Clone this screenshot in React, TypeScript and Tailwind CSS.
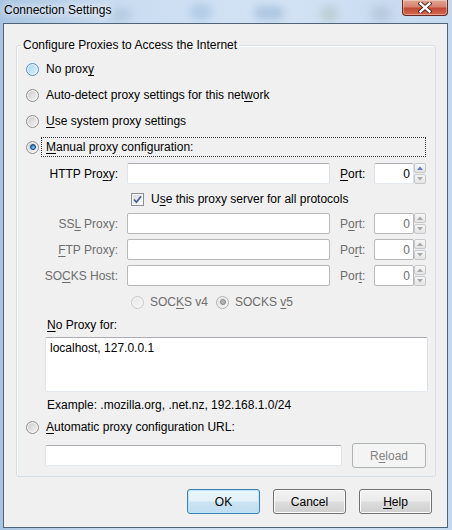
import type { ReactNode } from "react";

const GRAY = "text-[#6d6d6d]";

function Key({ children }: { children: ReactNode }) {
  return <u className="underline underline-offset-[2px]">{children}</u>;
}

function Radio({ state }: { state: "off" | "hover" | "on" | "dis-off" | "dis-on" }) {
  const ring =
    state === "hover"
      ? "border-[#4f94cf] bg-[linear-gradient(135deg,#9fd3f5,#e4f3fd)]"
      : state === "dis-off"
        ? "border-[#c8c8c8] bg-[linear-gradient(135deg,#e6e6e6,#f8f8f8)]"
        : state === "dis-on"
          ? "border-[#b0b0b0] bg-[linear-gradient(135deg,#dcdcdc,#f6f6f6)]"
          : "border-[#8e8f8f] bg-[linear-gradient(135deg,#c9c9c9,#f7f7f7)]";
  return (
    <span
      className={`flex h-[13px] w-[13px] shrink-0 items-center justify-center rounded-full border shadow-[inset_0_0_0_1px_#f4f4f4] ${ring}`}
    >
      {state === "on" && (
        <span className="h-[6px] w-[6px] rounded-full border border-[#0d3c72] bg-[radial-gradient(circle_at_60%_70%,#7fd3fa,#1a5fa8)]" />
      )}
      {state === "dis-on" && <span className="h-[6px] w-[6px] rounded-full border border-[#8a8a8a] bg-[#b4b4b4]" />}
    </span>
  );
}

function Checkbox() {
  return (
    <span className="flex h-[13px] w-[13px] shrink-0 items-center justify-center border border-[#8e8f8f] bg-[linear-gradient(135deg,#d9d9d9,#ffffff)] shadow-[inset_0_0_0_1px_#f4f4f4]">
      <svg width="9" height="9" viewBox="0 0 9 9">
        <path d="M1 4.5 L3.5 7.2 L8 1.3" fill="none" stroke="#4a5f97" strokeWidth="1.8" />
      </svg>
    </span>
  );
}

function TextBox({ w, disabled, children, right }: { w: string; disabled?: boolean; children?: ReactNode; right?: boolean }) {
  return (
    <div
      className={`flex h-[21px] ${w} items-center rounded-[2px] border bg-white px-[3px] ${
        right ? "justify-end" : ""
      } ${
        disabled
          ? "border-[#b8b8b8] text-[#6d6d6d]"
          : "border-[#abadb3] border-b-[#e3e9ef] border-l-[#e2e3ea] border-r-[#dbdfe6]"
      }`}
    >
      {children}
    </div>
  );
}

function SpinBtn({ up, on }: { up?: boolean; on?: boolean }) {
  return (
    <div className="flex h-[10px] w-[12px] items-center justify-center rounded-[2px] border border-[#c4c7cb] bg-[linear-gradient(#f7f7f7,#e4e4e4)]">
      <svg width="6" height="4" viewBox="0 0 6 4">
        <path d={up ? "M0 4 L3 0.5 L6 4 Z" : "M0 0 L3 3.5 L6 0 Z"} fill={on ? "#5a7cb8" : "#a9a9a9"} />
      </svg>
    </div>
  );
}

function Port({ disabled }: { disabled?: boolean }) {
  return (
    <div className="flex">
      <TextBox w="w-[40px]" disabled={disabled} right>
        0
      </TextBox>
      <div className="flex flex-col gap-[1px]">
        <SpinBtn up on={!disabled} />
        <SpinBtn />
      </div>
    </div>
  );
}

function ProxyRow({ label, portLabel, disabled, className }: { label: ReactNode; portLabel: ReactNode; disabled?: boolean; className: string }) {
  return (
    <div className={`flex h-[21px] items-center ${className} ${disabled ? GRAY : ""}`}>
      <span className="w-[101px] text-right">{label}</span>
      <div className="ml-[9px]">
        <TextBox w="w-[203px]" disabled={disabled} />
      </div>
      <span className="ml-[10px] w-[34px]">{portLabel}</span>
      <Port disabled={disabled} />
    </div>
  );
}

function OptionRow({ state, children, focus }: { state: "off" | "hover" | "on"; children: ReactNode; focus?: boolean }) {
  return (
    <div className="flex h-[26px] items-center pl-[9px]">
      <Radio state={state} />
      <span
        className={`ml-[2px] mr-[9px] flex h-[20px] flex-1 items-center border px-[4px] ${
          focus ? "border-dotted border-[#333]" : "border-transparent"
        }`}
      >
        {children}
      </span>
    </div>
  );
}

function Button({ children, primary, disabled, className }: { children: ReactNode; primary?: boolean; disabled?: boolean; className: string }) {
  const look = disabled
    ? "border-[#adb2b5] bg-[#f4f4f4] text-[#838383]"
    : primary
      ? "border-[#3c7fb1] bg-[linear-gradient(#eaf6fd_0%,#e4f1f9_48%,#cbe4f3_52%,#bfdcef_100%)] shadow-[inset_0_0_0_1px_#bde6fb]"
      : "border-[#707070] bg-[linear-gradient(#f2f2f2_0%,#ebebeb_48%,#dddddd_52%,#cfcfcf_100%)] shadow-[inset_0_0_0_1px_#fcfcfc]";
  return (
    <div className={`flex h-[25px] items-center justify-center rounded-[3px] border ${look} ${className}`}>{children}</div>
  );
}

function CloseButton() {
  return (
    <div className="mr-[4px] flex h-[16px] w-[46px] items-center justify-center rounded-b-[4px] border border-t-0 border-[#6a2a22] bg-[linear-gradient(#e2a593_0%,#d7826f_45%,#c04a34_55%,#d56a4f_100%)] shadow-[inset_0_0_0_1px_rgba(255,255,255,0.35)]">
      <svg width="14" height="11" viewBox="0 0 14 11">
        <path d="M2.5 1.5 L11.5 9.5 M11.5 1.5 L2.5 9.5" stroke="#3d1a16" strokeWidth="4.2" strokeLinecap="square" />
        <path d="M2.5 1.5 L11.5 9.5 M11.5 1.5 L2.5 9.5" stroke="#ffffff" strokeWidth="2.4" strokeLinecap="square" />
      </svg>
    </div>
  );
}

export default function App() {
  return (
    <div className="relative h-[530px] w-[452px] overflow-hidden bg-[linear-gradient(90deg,#a9c4e2_0%,#c9dcf0_25%,#d3e3f4_60%,#c4d9ef_100%)] font-['Liberation_Sans',Arial,sans-serif] text-[12px] leading-[16px] text-black">
      {/* blurred toolbar behind the glass */}
      <div className="absolute left-[108px] top-[8px] h-[14px] w-[24px] rounded-full bg-[#8aa6c2] opacity-30 blur-[4px]" />
      <div className="absolute left-[190px] top-[4px] h-[16px] w-[22px] rounded-full bg-[#6f9ccc] opacity-30 blur-[4px]" />
      <div className="absolute left-[254px] top-[6px] h-[14px] w-[30px] rounded-[6px] bg-[#5a84b8] opacity-30 blur-[4px]" />
      <div className="absolute left-[320px] top-[6px] h-[16px] w-[18px] rounded-full bg-[#93a590] opacity-30 blur-[4px]" />
      <div className="absolute left-[370px] top-[6px] h-[16px] w-[22px] rounded-full bg-[#8fa0b2] opacity-30 blur-[4px]" />

      <div className="relative flex h-[23px] items-start justify-between">
        <span className="pl-[4px] pt-[2px] [text-shadow:0_0_6px_#ffffff,0_0_10px_#ffffff]">Connection Settings</span>
        <CloseButton />
      </div>

      <div className="relative ml-[3px] h-[505px] w-[445px] border border-[#4f6478] bg-[#f0f0f0] pl-[12px] pt-[13px]">
        <fieldset className="w-[420px] rounded-[3px] border border-[#d5dfe5] pb-[8px] shadow-[inset_1px_1px_0_#ffffff]">
          <legend className="ml-[4px] px-[2px] leading-[16px]">Configure Proxies to Access the Internet</legend>

          <div className="mt-[3px]">
            <OptionRow state="hover">
              No prox<Key>y</Key>
            </OptionRow>
            <OptionRow state="off">
              Auto-detect proxy settings for this net<Key>w</Key>ork
            </OptionRow>
            <OptionRow state="off">
              <Key>U</Key>se system proxy settings
            </OptionRow>
            <OptionRow state="on" focus>
              <Key>M</Key>anual proxy configuration:
            </OptionRow>
          </div>

          <ProxyRow
            className="mt-[3px]"
            label={
              <>
                HTTP Pro<Key>x</Key>y:
              </>
            }
            portLabel={
              <>
                <Key>P</Key>ort:
              </>
            }
          />

          <div className="mt-[2px] flex h-[26px] items-center pl-[114px]">
            <Checkbox />
            <span className="ml-[7px]">
              U<Key>s</Key>e this proxy server for all protocols
            </span>
          </div>

          <ProxyRow
            className="mt-[1px]"
            disabled
            label={
              <>
                SS<Key>L</Key> Proxy:
              </>
            }
            portLabel={
              <>
                P<Key>o</Key>rt:
              </>
            }
          />
          <ProxyRow
            className="mt-[5px]"
            disabled
            label={
              <>
                <Key>F</Key>TP Proxy:
              </>
            }
            portLabel={
              <>
                Po<Key>r</Key>t:
              </>
            }
          />
          <ProxyRow
            className="mt-[5px]"
            disabled
            label={
              <>
                SO<Key>C</Key>KS Host:
              </>
            }
            portLabel={
              <>
                Por<Key>t</Key>:
              </>
            }
          />

          <div className={`mt-[3px] flex h-[26px] items-center pl-[114px] ${GRAY}`}>
            <Radio state="dis-off" />
            <span className="ml-[6px] w-[66px]">
              SOC<Key>K</Key>S v4
            </span>
            <Radio state="dis-on" />
            <span className="ml-[6px]">
              SOCKS <Key>v</Key>5
            </span>
          </div>

          <div className="mt-[2px] h-[16px] pl-[30px]">
            <Key>N</Key>o Proxy for:
          </div>
          <div className="ml-[28px] mt-[4px] h-[55px] w-[383px] rounded-[2px] border border-[#abadb3] border-b-[#e3e9ef] border-l-[#e2e3ea] border-r-[#dbdfe6] bg-white px-[4px] pt-[2px]">
            localhost, 127.0.0.1
          </div>
          <div className="mt-[5px] h-[16px] pl-[30px]">Example: .mozilla.org, .net.nz, 192.168.1.0/24</div>

          <div className="mt-[1px]">
            <OptionRow state="off">
              <Key>A</Key>utomatic proxy configuration URL:
            </OptionRow>
          </div>
          <div className="ml-[28px] mt-[3px] flex h-[25px] items-center">
            <TextBox w="w-[297px]" />
            <Button disabled className="ml-[10px] w-[74px]">
              R<Key>e</Key>load
            </Button>
          </div>
        </fieldset>

        <div className="mr-[15px] mt-[12px] flex justify-end gap-[13px]">
          <Button primary className="w-[73px]">
            OK
          </Button>
          <Button className="w-[73px]">Cancel</Button>
          <Button className="w-[73px]">
            <Key>H</Key>elp
          </Button>
        </div>
      </div>
    </div>
  );
}
